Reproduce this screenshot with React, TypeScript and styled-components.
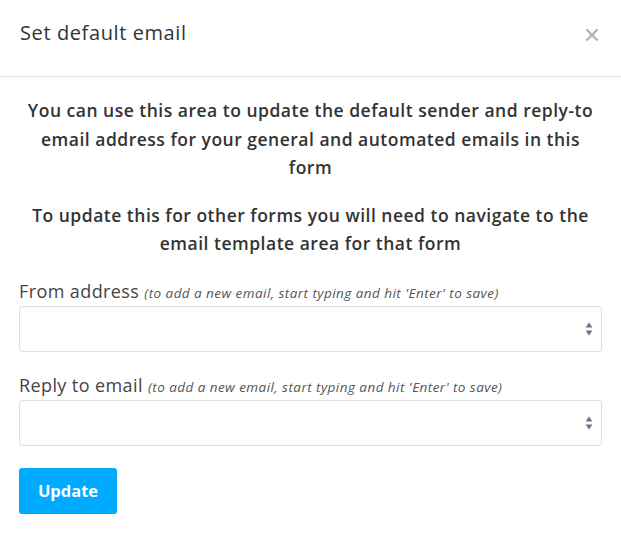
import { createGlobalStyle, styled } from "styled-components";

const GlobalStyle = createGlobalStyle`
  body {
    margin: 0;
    background: #fff;
    font-family: "Open Sans", Lato, sans-serif;
    color: #333;
  }
`;

const Modal = styled.div`
  width: 621px;
  height: 534px;
  background: #fff;
`;

const Header = styled.div`
  height: 76px;
  padding: 0 20px;
  display: flex;
  align-items: flex-start;
  justify-content: space-between;
  border-bottom: 1px solid #dfe5e8;
`;

const Title = styled.h2`
  margin: 19px 0 0;
  font-size: 20px;
  font-weight: 400;
  letter-spacing: 0.6px;
  color: #333;
`;

const Close = styled.button`
  margin-top: 28px;
  margin-right: 2px;
  padding: 0;
  border: 0;
  background: none;
  color: #aab2bb;
  display: flex;
  cursor: pointer;
`;

const Body = styled.div`
  padding: 19px 19px 0 19px;
`;

const Intro = styled.p`
  margin: 0 0 19px;
  text-align: center;
  font-size: 17.5px;
  font-weight: 600;
  letter-spacing: 0.5px;
  line-height: 28.5px;
  color: #333;
`;

const Field = styled.div`
  margin-top: 22px;
  display: flex;
  flex-direction: column;
  gap: 4px;
`;

const Label = styled.label`
  display: block;
  font-size: 18px;
  line-height: 22px;
  letter-spacing: 0.4px;
  color: #444;
`;

const Hint = styled.em`
  font-size: 13.5px;
  line-height: 1;
  letter-spacing: 0.45px;
  color: #555;
`;

const SelectBox = styled.div`
  height: 44px;
  border: 1px solid #d8dee3;
  border-radius: 4px;
  display: flex;
  align-items: center;
  justify-content: flex-end;
  padding-right: 8px;
`;

const Button = styled.button`
  margin-top: 22px;
  width: 98px;
  height: 46px;
  border: 0;
  border-radius: 3px;
  background: #00aaff;
  color: #fff;
  font-family: inherit;
  font-size: 16.5px;
  font-weight: 700;
  cursor: pointer;
`;

const Arrows = () => (
  <svg width="8" height="14" viewBox="0 0 8 14">
    <path d="M4 0.5 L7.5 5.5 H0.5 Z" fill="#6b7785" />
    <path d="M4 13.5 L7.5 8.5 H0.5 Z" fill="#6b7785" />
  </svg>
);

const SelectField = ({ label }: { label: string }) => (
  <Field>
    <Label>
      {label} <Hint>(to add a new email, start typing and hit 'Enter' to save)</Hint>
    </Label>
    <SelectBox>
      <Arrows />
    </SelectBox>
  </Field>
);

export default function App() {
  return (
    <Modal>
      <GlobalStyle />
      <Header>
        <Title>Set default email</Title>
        <Close aria-label="Close">
          <svg width="14" height="14" viewBox="0 0 14 14">
            <path d="M1.5 1.5 L12.5 12.5 M12.5 1.5 L1.5 12.5" stroke="currentColor" strokeWidth="2.4" />
          </svg>
        </Close>
      </Header>
      <Body>
        <Intro>
          You can use this area to update the default sender and reply-to email address for your
          general and automated emails in this form
        </Intro>
        <Intro>
          To update this for other forms you will need to navigate to the email template area for
          that form
        </Intro>
        <SelectField label="From address" />
        <SelectField label="Reply to email" />
        <Button>Update</Button>
      </Body>
    </Modal>
  );
}
